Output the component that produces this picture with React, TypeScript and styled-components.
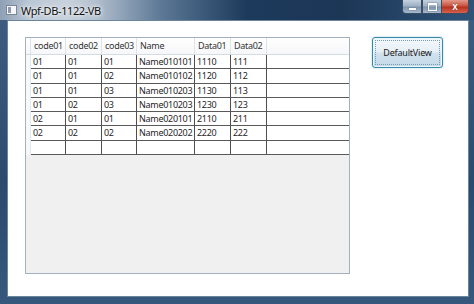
import React from "react"
import styled, { createGlobalStyle } from "styled-components"

const GlobalStyle = createGlobalStyle`
  html, body {
    margin: 0;
    padding: 0;
    background: #ffffff;
  }
  body {
    font-family: "Noto Sans", "Liberation Sans", sans-serif;
  }
`

type Row = {
  code01: string
  code02: string
  code03: string
  name: string
  data01: string
  data02: string
}

const rows: Row[] = [
  { code01: "01", code02: "01", code03: "01", name: "Name010101", data01: "1110", data02: "111" },
  { code01: "01", code02: "01", code03: "02", name: "Name010102", data01: "1120", data02: "112" },
  { code01: "01", code02: "01", code03: "03", name: "Name010203", data01: "1130", data02: "113" },
  { code01: "01", code02: "02", code03: "03", name: "Name010203", data01: "1230", data02: "123" },
  { code01: "02", code02: "01", code03: "01", name: "Name020101", data01: "2110", data02: "211" },
  { code01: "02", code02: "02", code03: "02", name: "Name020202", data01: "2220", data02: "222" },
]

const columns: { key: keyof Row; label: string; width: number }[] = [
  { key: "code01", label: "code01", width: 35 },
  { key: "code02", label: "code02", width: 36 },
  { key: "code03", label: "code03", width: 35 },
  { key: "name", label: "Name", width: 58 },
  { key: "data01", label: "Data01", width: 36 },
  { key: "data02", label: "Data02", width: 36 },
]

const App = () => {
  return (
    <>
      <GlobalStyle />
      <Window>
        <TitleBar>
          <AppIcon>
            <span />
          </AppIcon>
          <Title>Wpf-DB-1122-VB</Title>
          <Caption>
            <CaptionButton>
              <MinGlyph />
            </CaptionButton>
            <CaptionButton>
              <MaxGlyph />
            </CaptionButton>
            <CaptionButton $close>
              <CloseGlyph>x</CloseGlyph>
            </CaptionButton>
          </Caption>
        </TitleBar>
        <Client>
          <DataGrid>
            <HeaderRow>
              <RowHeader $header />
              {columns.map((c) => (
                <HeaderCell key={c.key} $width={c.width}>
                  {c.label}
                </HeaderCell>
              ))}
              <HeaderFiller />
            </HeaderRow>
            {rows.map((r, i) => (
              <DataRow key={i}>
                <RowHeader />
                {columns.map((c) => (
                  <Cell key={c.key} $width={c.width}>
                    {r[c.key]}
                  </Cell>
                ))}
                <Filler />
              </DataRow>
            ))}
            <DataRow>
              <RowHeader />
              {columns.map((c) => (
                <Cell key={c.key} $width={c.width} />
              ))}
              <Filler />
            </DataRow>
          </DataGrid>
          <ViewButton>
            <span>DefaultView</span>
          </ViewButton>
        </Client>
      </Window>
    </>
  )
}

export default App

const Window = styled.div`
  width: 474px;
  height: 304px;
  box-sizing: border-box;
  display: flex;
  flex-direction: column;
  padding: 0 5px 7px 7px;
  background: linear-gradient(180deg, #3f5f82 0%, #2a4a6e 60%, #35587c 100%);
  overflow: hidden;
`

const TitleBar = styled.div`
  height: 20px;
  display: flex;
  align-items: center;
  margin: 0 -5px 0 -7px;
  padding-left: 6px;
  background: linear-gradient(
    90deg,
    #8ea0b5 0%,
    #b9c6d4 6%,
    #c8d2dc 14%,
    #b3c0ce 20%,
    #5c7896 34%,
    #1d3a5c 52%,
    #1c3656 72%,
    #2f5478 100%
  );
`

const AppIcon = styled.div`
  width: 11px;
  height: 10px;
  box-sizing: border-box;
  border: 1px solid #7b8797;
  background: #f4f6f8;
  display: flex;
  padding: 1px;
  margin-right: 4px;

  span {
    width: 3px;
    background: #8c9aab;
  }
`

const Title = styled.div`
  font-family: "Noto Sans", "Liberation Sans", sans-serif;
  font-size: 11px;
  color: #111;
  text-shadow: 0 0 6px #ffffff, 0 0 3px #ffffff;
  letter-spacing: -0.4px;
`

const Caption = styled.div`
  margin-left: auto;
  align-self: flex-start;
  display: flex;
  margin-right: 5px;
`

const CaptionButton = styled.div<{ $close?: boolean }>`
  width: ${(p) => (p.$close ? 27 : 20)}px;
  height: 14px;
  box-sizing: border-box;
  border: 1px solid #3a4f66;
  border-top: none;
  border-left: ${(p) => (p.$close ? "none" : "1px solid #3a4f66")};
  border-radius: ${(p) => (p.$close ? "0 0 4px 0" : "0")};
  background: ${(p) =>
    p.$close
      ? "linear-gradient(180deg, #e39a8c 0%, #c9533f 45%, #b7321f 55%, #d8614b 100%)"
      : "linear-gradient(180deg, #c5d1de 0%, #9fb1c5 45%, #7f94ad 55%, #a6b9cc 100%)"};
  display: flex;
  align-items: center;
  justify-content: center;
  &:first-child {
    border-radius: 0 0 0 4px;
  }
`

const MinGlyph = styled.div`
  width: 7px;
  height: 2px;
  margin-top: 5px;
  background: #ffffff;
  box-shadow: 0 0 1px #2a3a4c;
`

const MaxGlyph = styled.div`
  width: 7px;
  height: 5px;
  border: 1px solid #ffffff;
  border-top-width: 2px;
  box-shadow: 0 0 1px #2a3a4c;
`

const CloseGlyph = styled.div`
  font-family: "Liberation Sans", sans-serif;
  font-weight: bold;
  font-size: 10px;
  line-height: 10px;
  color: #ffffff;
  text-shadow: 0 0 1px #5a1a10;
`

const Client = styled.div`
  flex: 1;
  background: #ffffff;
  border: 1px solid #6d849d;
  display: flex;
  align-items: flex-start;
  padding: 16px 0 0 17px;
`

const DataGrid = styled.div`
  width: 325px;
  height: 237px;
  box-sizing: border-box;
  border: 1px solid #a3b0be;
  background: #f0f0f0;
  display: flex;
  flex-direction: column;
  font-family: "Noto Sans", "Liberation Sans", sans-serif;
  font-size: 9px;
  letter-spacing: -0.3px;
  color: #262626;
`

const HeaderRow = styled.div`
  display: flex;
  height: 16px;
  background: linear-gradient(180deg, #ffffff 0%, #f6f7f9 100%);
  border-bottom: 1px solid #d5dbe2;
`

const RowHeader = styled.div<{ $header?: boolean }>`
  width: 4px;
  flex-shrink: 0;
  background: ${(p) => (p.$header ? "transparent" : "#f7f8fa")};
  border-right: 1px solid ${(p) => (p.$header ? "#dde3e9" : "#e3e6ea")};
`

const HeaderCell = styled.div<{ $width: number }>`
  width: ${(p) => p.$width}px;
  box-sizing: border-box;
  flex-shrink: 0;
  padding: 0 0 0 3px;
  line-height: 16px;
  border-right: 1px solid #dde3e9;
  color: #333;
  white-space: nowrap;
  overflow: hidden;
`

const HeaderFiller = styled.div`
  flex: 1;
`

const DataRow = styled.div`
  display: flex;
  height: 14.3px;
  background: #ffffff;
`

const Cell = styled.div<{ $width: number }>`
  width: ${(p) => p.$width}px;
  box-sizing: border-box;
  flex-shrink: 0;
  padding: 0 0 0 2px;
  line-height: 13px;
  border-right: 1px solid #4e4e4e;
  border-bottom: 1px solid #5a5a5a;
  white-space: nowrap;
  overflow: hidden;
`

const Filler = styled.div`
  flex: 1;
  border-bottom: 1px solid #5a5a5a;
`

const ViewButton = styled.button`
  margin-left: 22px;
  width: 71px;
  height: 31px;
  box-sizing: border-box;
  border: 1px solid #3c87a8;
  border-radius: 3px;
  padding: 2px;
  background: linear-gradient(180deg, #f4f8fb 0%, #e6eff6 48%, #d2e2ee 52%, #c4d9e8 100%);
  box-shadow: 0 0 2px #8fd0e0, inset 0 0 0 1px #e9f6fb;
  font-family: "Noto Sans", "Liberation Sans", sans-serif;
  font-size: 9px;
  letter-spacing: -0.2px;
  color: #1a1a1a;
  display: flex;
  align-items: stretch;

  span {
    flex: 1;
    display: flex;
    align-items: center;
    justify-content: center;
    border: 1px dotted #7a9ab0;
    padding-bottom: 1px;
  }
`
